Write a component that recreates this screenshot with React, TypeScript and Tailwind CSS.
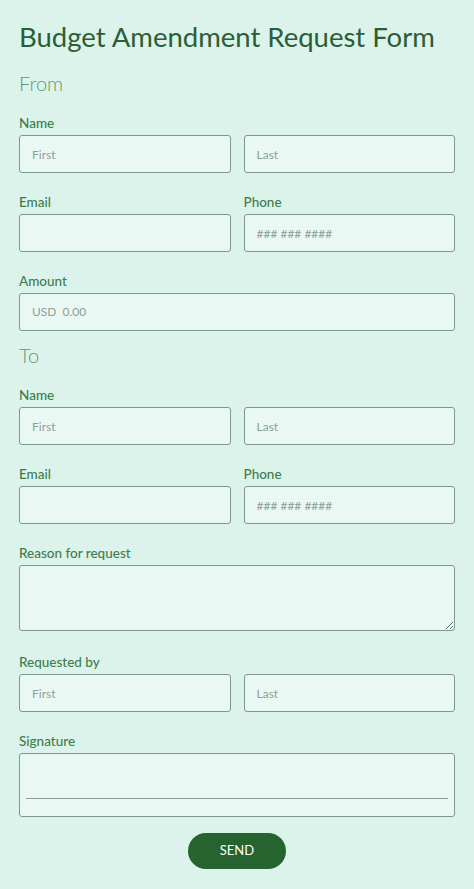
import React from "react"

const font = { fontFamily: '"Lato", "Open Sans", sans-serif' }

const inputCls =
	"h-[38px] w-full rounded-[3px] border border-[#7c9a8b] bg-[#eaf8f4] px-[12px] text-[12px] text-[#2f4a3a] placeholder:text-[#8d9f96] outline-none"

const Label = ({ children }: { children: React.ReactNode }) => (
	<div className="mb-[2px] h-[20px] text-[13.5px] font-medium leading-[20px] text-[#3f7d4c]">{children}</div>
)

const NameRow = ({ label }: { label: string }) => (
	<div>
		<Label>{label}</Label>
		<div className="grid grid-cols-2 gap-[13px]">
			<input className={inputCls} placeholder="First" />
			<input className={inputCls} placeholder="Last" />
		</div>
	</div>
)

const ContactRow = () => (
	<div className="grid grid-cols-2 gap-[13px]">
		<div>
			<Label>Email</Label>
			<input className={inputCls} />
		</div>
		<div>
			<Label>Phone</Label>
			<input className={inputCls} placeholder="### ### ####" />
		</div>
	</div>
)

const Heading = ({ children }: { children: React.ReactNode }) => (
	<div className="h-[26px] text-[20px] font-light leading-[26px] text-[#5c9a6b]">{children}</div>
)

export default function App() {
	return (
		<div style={font} className="min-h-[889px] w-[474px] bg-[#dcf3ec] px-[19px] pt-[21px] pb-[20px]">
			{/* Title */}
			<h1 className="h-[32px] text-[27.5px] leading-[32px] text-[#2b5e36]">Budget Amendment Request Form</h1>

			{/* From section */}
			<div className="mt-[17px]">
				<Heading>From</Heading>
			</div>
			<div className="mt-[17px] flex flex-col gap-[19px]">
				<NameRow label="Name" />
				<ContactRow />
				<div>
					<Label>Amount</Label>
					<div className="flex h-[38px] w-full items-center rounded-[3px] border border-[#7c9a8b] bg-[#eaf8f4] px-[12px] text-[12px]">
						<span className="text-[#8d9f96]">USD</span>
						<input className="ml-[6px] flex-1 bg-transparent text-[#2f4a3a] placeholder:text-[#8d9f96] outline-none" placeholder="0.00" />
					</div>
				</div>
			</div>

			{/* To section */}
			<div className="mt-[11px]">
				<Heading>To</Heading>
			</div>
			<div className="mt-[17px] flex flex-col gap-[19px]">
				<NameRow label="Name" />
				<ContactRow />
				<div>
					<Label>Reason for request</Label>
					<textarea className="block h-[66px] w-full resize-y rounded-[3px] border border-[#7c9a8b] bg-[#eaf8f4] px-[12px] py-[8px] text-[12px] outline-none" />
				</div>
				<div className="mt-[2px]">
					<NameRow label="Requested by" />
				</div>
				<div>
					<Label>Signature</Label>
					<div className="flex h-[64px] w-full flex-col justify-end rounded-[3px] border border-[#7c9a8b] bg-[#eaf8f4] px-[6px] pb-[17px]">
						<div className="h-px w-full bg-[#8a9f95]" />
					</div>
				</div>
			</div>

			{/* Submit */}
			<div className="mt-[16px] flex justify-center">
				<button className="h-[36px] w-[98px] rounded-full bg-[#25632f] text-[13px] text-white">SEND</button>
			</div>
		</div>
	)
}
